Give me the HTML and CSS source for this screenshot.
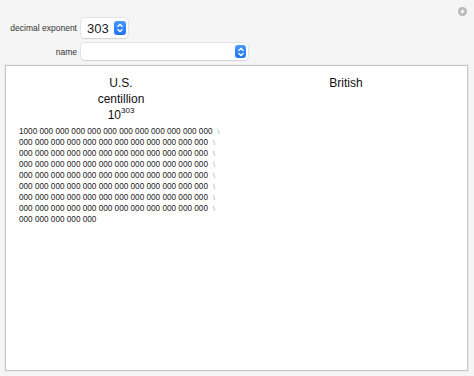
FILE: index.html
```html
<!DOCTYPE html>
<html lang="en">
<head>
    <meta charset="UTF-8">
    <meta name="viewport" content="width=device-width, initial-scale=1.0">
    <title>Large Numbers</title>
    <link rel="stylesheet" href="styles.css">
</head>
<body>
    <div class="app">
        <div class="close-btn">
            <svg width="9" height="9" viewBox="0 0 9 9">
                <circle cx="4.5" cy="4.5" r="4.5" fill="#b9b9b9"/>
                <path d="M2.6 4.5h3.8M4.5 2.6v3.8" stroke="#fff" stroke-width="1.3"/>
            </svg>
        </div>

        <div class="controls">
            <label class="ctl-label">decimal exponent</label>
            <div class="popup popup-num">
                <span class="popup-value">303</span>
                <span class="stepper">
                    <svg width="8" height="10" viewBox="0 0 8 10">
                        <path d="M1.5 3.8L4 1.5L6.5 3.8M1.5 6.2L4 8.5L6.5 6.2" fill="none" stroke="#fff" stroke-width="1.3"/>
                    </svg>
                </span>
            </div>

            <label class="ctl-label">name</label>
            <div class="popup popup-name">
                <span class="popup-value"></span>
                <span class="stepper">
                    <svg width="8" height="10" viewBox="0 0 8 10">
                        <path d="M1.5 3.8L4 1.5L6.5 3.8M1.5 6.2L4 8.5L6.5 6.2" fill="none" stroke="#fff" stroke-width="1.3"/>
                    </svg>
                </span>
            </div>
        </div>

        <div class="panel">
            <div class="col">
                <div class="heading">U.S.<br>centillion<br>10<sup>303</sup></div>
                <div class="digits" id="digits"></div>
            </div>
            <div class="col">
                <div class="heading">British</div>
            </div>
        </div>
    </div>

    <script>
        // 10^303 written out, 12 groups on a line
        var groups = [];
        for (var i = 0; i < 101; i++) {
            groups.push('000');
        }
        groups[0] = '1000';

        var box = document.getElementById('digits');
        for (var start = 0; start < groups.length; start += 12) {
            var line = document.createElement('div');
            line.className = 'digit-line';
            line.textContent = groups.slice(start, start + 12).join(' ');
            if (start + 12 < groups.length) {
                var mark = document.createElement('span');
                mark.className = 'cont';
                mark.textContent = '\\';
                line.appendChild(mark);
            }
            box.appendChild(line);
        }
    </script>
</body>
</html>
```

FILE: styles.css
```css
body {
    margin: 0;
    background-color: #f5f5f5;
    font-family: "Liberation Sans", Arial, sans-serif;
    color: #222;
}

.app {
    position: relative;
    width: 474px;
    height: 376px;
    padding-top: 18px;
    box-sizing: border-box;
}

.close-btn {
    position: absolute;
    top: 7px;
    left: 458px;
}

.close-btn svg {
    display: block;
}

.controls {
    display: grid;
    grid-template-columns: 77px auto;
    column-gap: 4px;
    row-gap: 5px;
    align-items: center;
    justify-items: start;
}

.ctl-label {
    justify-self: end;
    font-size: 8.5px;
    color: #333;
}

.popup {
    display: flex;
    align-items: center;
    justify-content: space-between;
    background-color: #fff;
    border-radius: 4px;
    box-shadow: 0 0 0 0.5px #d4d4d4, 0 1px 1px rgba(0, 0, 0, 0.12);
    box-sizing: border-box;
    padding: 0 2px 0 6px;
}

.popup-num {
    width: 47px;
    height: 20px;
}

.popup-name {
    width: 167px;
    height: 17px;
}

.popup-value {
    font-size: 13px;
    color: #222;
}

.stepper {
    display: flex;
    align-items: center;
    justify-content: center;
    width: 12px;
    height: 14px;
    border-radius: 3px;
    background: linear-gradient(#4a98ff, #1f74f0);
}

.popup-name .stepper {
    width: 11px;
    height: 13px;
}

.stepper svg {
    display: block;
}

.panel {
    display: grid;
    grid-template-columns: 230px 220px;
    margin: 5px 0 0 5px;
    width: 463px;
    height: 306px;
    box-sizing: border-box;
    background-color: #fff;
    border: 1px solid #c6c6c6;
    box-shadow: 0 0 0 1px #ececec;
    padding-top: 9px;
}

.col {
    padding: 0 13px;
}

.heading {
    text-align: center;
    font-size: 12px;
    line-height: 16px;
    color: #111;
}

.heading sup {
    font-size: 8px;
    vertical-align: 6px;
    line-height: 0;
}

.digits {
    margin-top: 3px;
    font-size: 8.2px;
    line-height: 11px;
    color: #222;
}

.digit-line {
    white-space: nowrap;
}

.cont {
    margin-left: 5px;
    font-size: 7px;
    color: #999;
}
```
